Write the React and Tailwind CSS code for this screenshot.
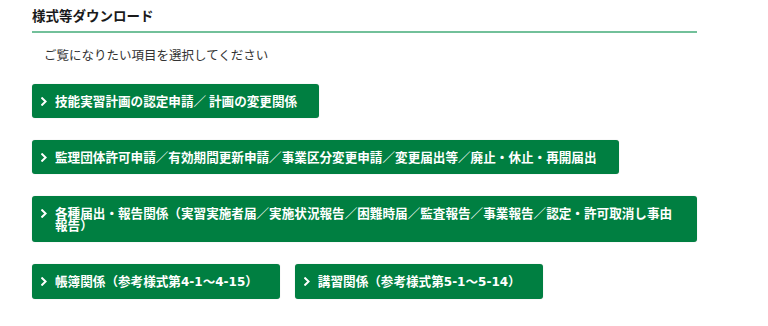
import React from "react";

const font = { fontFamily: '"Noto Sans CJK JP", "Noto Sans", sans-serif' };
const btnFont = { fontFamily: '"DejaVu Sans", "Noto Sans CJK JP", sans-serif' };

function Chevron() {
  return (
    <svg width="6" height="9" viewBox="0 0 6 9" className="shrink-0 mt-[1px]">
      <path d="M1.2 1.2 L4.6 4.5 L1.2 7.8" fill="none" stroke="white" strokeWidth="2" strokeLinecap="square" strokeLinejoin="miter" />
    </svg>
  );
}

function Btn({ children }) {
  return (
    <a
      href="#"
      className="inline-flex items-start max-w-full bg-[#007f41] text-white rounded-[3px] pl-[9px] pr-[22px] py-[11px] font-bold text-[12.6px] leading-[12px] shadow-[0_0_1px_rgba(0,0,0,0.25)]"
    >
      <span className="flex items-center h-[12px]">
        <Chevron />
      </span>
      <span className="ml-[8px]">{children}</span>
    </a>
  );
}

function Num({ children }) {
  return <span style={btnFont} className="text-[12px]">{children}</span>;
}

export default function App() {
  return (
    <div className="bg-white w-[768px] h-[326px] overflow-hidden text-[#222]" style={font}>
      <div className="ml-[32px] w-[665px] pt-[5px]">
        <h2 className="font-bold text-[13.5px] leading-[20px] pb-[6px] border-b-2 border-[#72c09a] text-[#1a1a1a]">
          様式等ダウンロード
        </h2>
        <p className="ml-[12px] mt-[13px] text-[12.5px] leading-[18px] text-[#333]">
          ご覧になりたい項目を選択してください
        </p>
        <div className="mt-[20px] flex flex-col gap-[22px] items-start">
          <Btn>技能実習計画の認定申請／ 計画の変更関係</Btn>
          <Btn>監理団体許可申請／有効期間更新申請／事業区分変更申請／変更届出等／廃止・休止・再開届出</Btn>
          <Btn>各種届出・報告関係（実習実施者届／実施状況報告／困難時届／監査報告／事業報告／認定・許可取消し事由報告）</Btn>
          <div className="flex gap-[15px]">
            <Btn>帳簿関係（参考様式第<Num>4-1</Num>～<Num>4-15</Num>）</Btn>
            <Btn>講習関係（参考様式第<Num>5-1</Num>～<Num>5-14</Num>）</Btn>
          </div>
        </div>
      </div>
    </div>
  );
}
